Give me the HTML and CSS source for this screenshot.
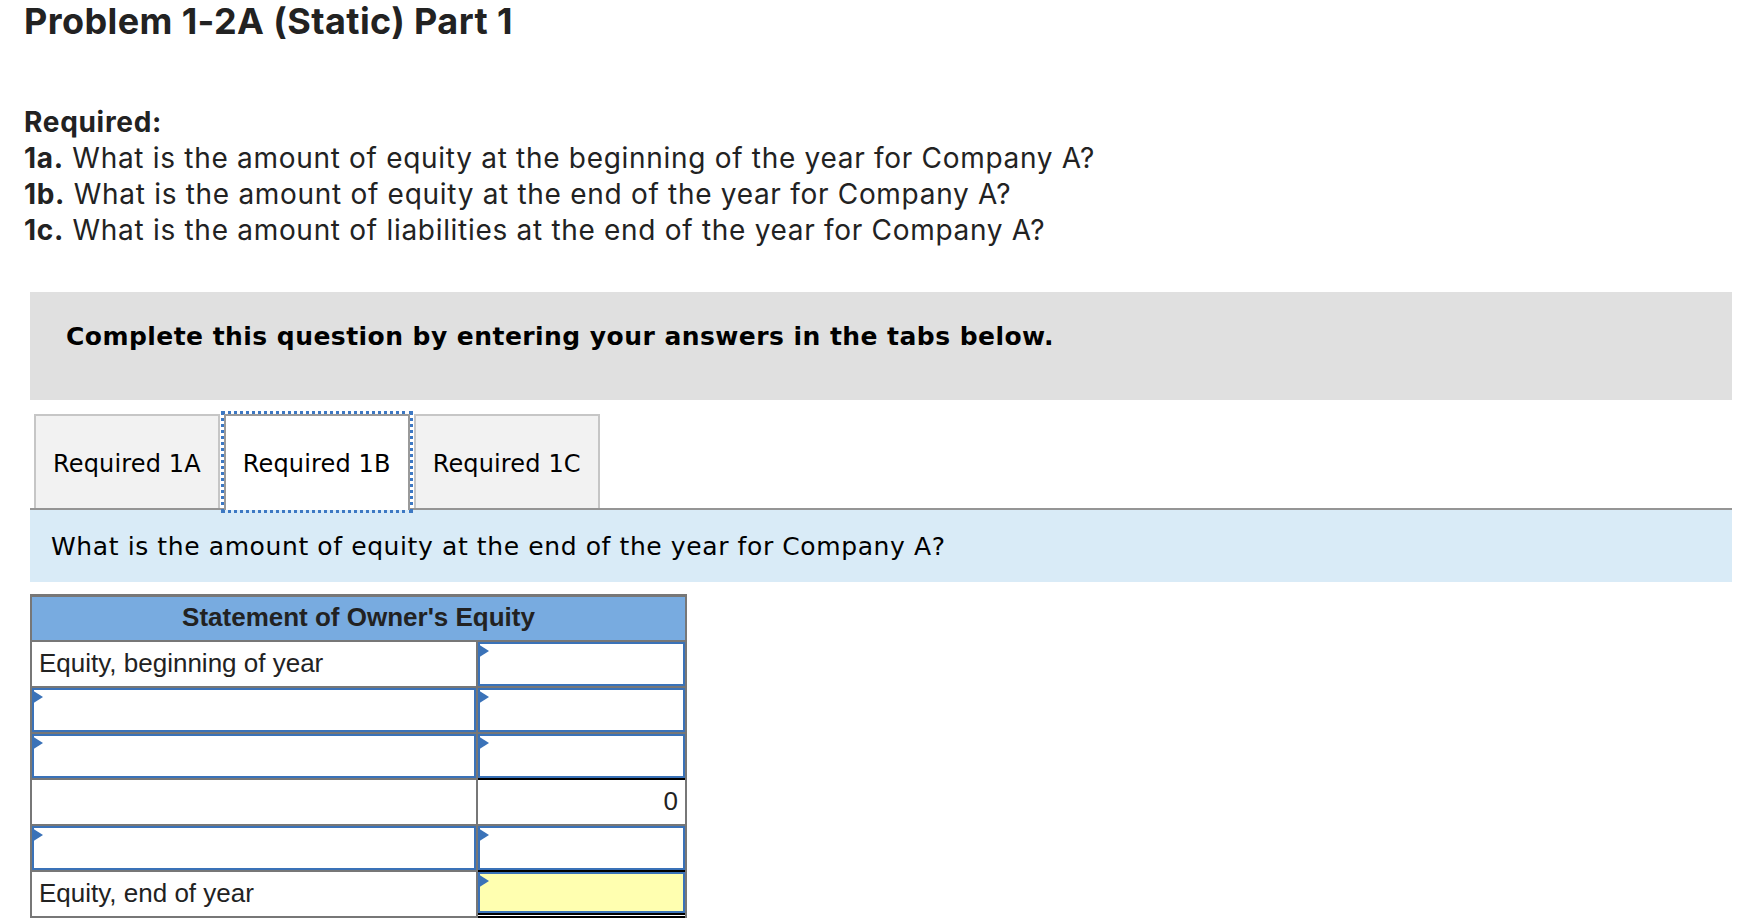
FILE: index.html
```html
<!DOCTYPE html>
<html lang="en">
<head>
<meta charset="utf-8">
<title>Problem 1-2A (Static) Part 1</title>
<link rel="stylesheet" href="styles.css">
</head>
<body>
<div class="page">
  <h1 class="title">Problem 1-2A (Static) Part 1</h1>
  <div class="required">
    <div class="req-head">Required:</div>
    <div class="req-line"><b>1a.</b> What is the amount of equity at the beginning of the year for Company A?</div>
    <div class="req-line"><b>1b.</b> What is the amount of equity at the end of the year for Company A?</div>
    <div class="req-line"><b>1c.</b> What is the amount of liabilities at the end of the year for Company A?</div>
  </div>

  <div class="panel">
    <div class="instruction">Complete this question by entering your answers in the tabs below.</div>
    <div class="tabs">
      <div class="tab">Required 1A</div>
      <div class="tab active">Required 1B</div>
      <div class="tab">Required 1C</div>
    </div>
    <div class="prompt">What is the amount of equity at the end of the year for Company A?</div>

    <div class="stmt">
      <div class="stmt-head">Statement of Owner's Equity</div>

      <div class="cell label">Equity, beginning of year</div>
      <div class="cell"><div class="input"><span class="flag"></span></div></div>

      <div class="cell"><div class="input"><span class="flag"></span></div></div>
      <div class="cell"><div class="input"><span class="flag"></span></div></div>

      <div class="cell"><div class="input"><span class="flag"></span></div></div>
      <div class="cell"><div class="input"><span class="flag"></span></div></div>

      <div class="cell label"></div>
      <div class="cell value sum">0</div>

      <div class="cell"><div class="input"><span class="flag"></span></div></div>
      <div class="cell"><div class="input"><span class="flag"></span></div></div>

      <div class="cell label">Equity, end of year</div>
      <div class="cell total"><div class="input yellow"><span class="flag"></span></div></div>
    </div>
  </div>
</div>
</body>
</html>
```

FILE: styles.css
```css
* {
  box-sizing: border-box;
}

html, body {
  margin: 0;
  padding: 0;
  background: #ffffff;
}

.page {
  width: 1748px;
  padding: 0 16px 0 0;
}

.title {
  margin: 0;
  padding: 1px 0 0 24px;
  height: 41px;
  font-family: "Inter", "Lato", sans-serif;
  font-weight: 700;
  font-size: 36px;
  letter-spacing: 0.4px;
  line-height: 40px;
  color: #222222;
}

.required {
  margin-top: 63px;
  padding-left: 24px;
  font-family: "Inter", "Lato", sans-serif;
  font-size: 28px;
  letter-spacing: 0.7px;
  line-height: 36px;
  color: #222222;
}

.req-head,
.req-line b {
  font-weight: 700;
}

.panel {
  margin: 44px 0 0 30px;
  width: 1702px;
}

.instruction {
  background: #e0e0e0;
  height: 108px;
  padding: 31px 0 0 36px;
  font-family: "DejaVu Sans", Verdana, sans-serif;
  font-weight: 700;
  font-size: 25px;
  letter-spacing: 0.45px;
  line-height: 28px;
  color: #000000;
}

.tabs {
  display: flex;
  align-items: flex-start;
  gap: 4px;
  margin-top: 14px;
  padding-left: 4px;
  height: 96px;
  border-bottom: 2px solid #959595;
}

.tab {
  height: 94px;
  padding: 34px 17px 0;
  background: #f2f2f2;
  border: 2px solid #c6c6c6;
  border-bottom: none;
  font-family: "DejaVu Sans", Verdana, sans-serif;
  font-size: 24px;
  letter-spacing: 0.15px;
  line-height: 28px;
  color: #000000;
  white-space: nowrap;
}

.tab.active {
  height: 96px;
  background: #ffffff;
  border-color: #9a9a9a;
  outline: 3px dotted #3d78c3;
  outline-offset: 0;
  position: relative;
}

.prompt {
  background: #d9ebf7;
  height: 72px;
  padding: 23px 21px 0;
  font-family: "DejaVu Sans", Verdana, sans-serif;
  font-size: 25px;
  letter-spacing: 0.6px;
  line-height: 28px;
  color: #000000;
}

.stmt {
  margin-top: 12px;
  width: 657px;
  display: grid;
  grid-template-columns: 444px 207px;
  grid-auto-rows: 44px;
  gap: 2px;
  background: #777777;
  border: 2px solid #777777;
  font-family: "Liberation Sans", Arial, sans-serif;
  font-size: 26px;
  color: #222222;
}

.stmt-head {
  grid-column: 1 / span 2;
  height: 43px;
  margin-top: -1px;
  background: #78abe0;
  text-align: center;
  font-weight: 700;
  line-height: 40px;
  align-self: end;
}

.cell {
  background: #ffffff;
  position: relative;
  line-height: 42px;
}

.cell.label {
  padding-left: 7px;
}

.cell.value {
  text-align: right;
  padding-right: 7px;
}

.cell.sum {
  box-shadow: 0 -2px 0 #000000;
}

.cell.total {
  display: flex;
  flex-direction: column;
  box-shadow: 0 -2px 0 #000000;
  border-bottom: 5px double #000000;
  margin-bottom: -2px;
  height: 46px;
}

.input {
  position: relative;
  height: 100%;
  border: 2px solid #3a72b8;
  background: #ffffff;
}

.total .input {
  flex: 1;
}

.input.yellow {
  background: #ffffb0;
}

.flag {
  position: absolute;
  left: -2px;
  top: 0;
  width: 0;
  height: 0;
  border-left: 11px solid #3a72b8;
  border-top: 7px solid transparent;
  border-bottom: 7px solid transparent;
}
```
